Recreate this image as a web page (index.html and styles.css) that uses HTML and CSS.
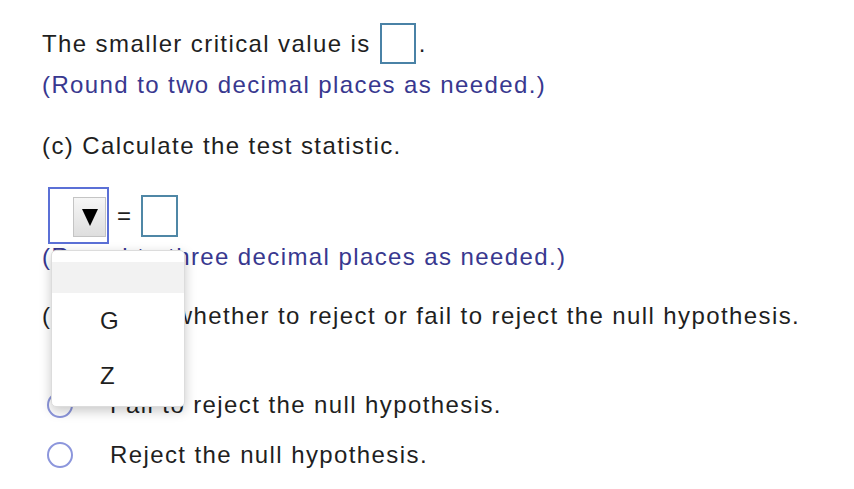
FILE: index.html
```html
<!DOCTYPE html>
<html lang="en">
<head>
    <meta charset="UTF-8">
    <meta name="viewport" content="width=device-width, initial-scale=1.0">
    <title>Hypothesis Test - Part (c)</title>
    <link rel="stylesheet" href="styles.css">
</head>
<body>
    <div class="question">
        <div class="answer-line">
            <span>The smaller critical value is</span>
            <span class="answer-box"></span>
            <span class="period">.</span>
        </div>
        <p class="hint hint-first">(Round to two decimal places as needed.)</p>

        <p class="prompt prompt-c">(c) Calculate the test statistic.</p>

        <div class="stat-row">
            <div class="select">
                <span class="select-btn"><span class="arrow"></span></span>
                <!-- open dropdown list -->
                <ul class="menu">
                    <li class="menu-item menu-blank"></li>
                    <li class="menu-item">G</li>
                    <li class="menu-item">Z</li>
                </ul>
            </div>
            <span class="equals">=</span>
            <span class="answer-box answer-box-small"></span>
        </div>
        <p class="hint hint-second">(Round to three decimal places as needed.)</p>

        <p class="prompt prompt-d">(d) Decide whether to reject or fail to reject the null hypothesis.</p>

        <label class="choice choice-first"><span class="radio"></span>Fail to reject the null hypothesis.</label>
        <label class="choice choice-second"><span class="radio"></span>Reject the null hypothesis.</label>
    </div>
</body>
</html>
```

FILE: styles.css
```css
body {
    margin: 0;
    background: #fff;
    font-family: "Liberation Sans", Arial, sans-serif;
    font-size: 24px;
    letter-spacing: 1.4px;
    color: #1f1f1f;
}
.question {
    padding: 23px 0 0 42px;
}
p {
    margin: 0;
    line-height: 28px;
}
.answer-line {
    display: flex;
    align-items: center;
    height: 41px;
    line-height: 28px;
}
.answer-box {
    display: inline-block;
    box-sizing: border-box;
    width: 36px;
    height: 41px;
    margin-left: 9px;
    border: 2px solid #4a82a6;
    background: #fff;
}
.period {
    margin-left: 3px;
}
.hint {
    color: #38388f;
}
.hint-first {
    margin-top: 7px;
}
.prompt-c {
    margin-top: 33px;
}
.stat-row {
    display: flex;
    align-items: center;
    margin-top: 27px;
    padding-left: 6px;
    line-height: 28px;
}
.select {
    position: relative;
    box-sizing: border-box;
    width: 61px;
    height: 57px;
    border: 2px solid #5b70d6;
    display: flex;
    justify-content: flex-end;
    align-items: flex-start;
    padding: 8px 1px 0 0;
}
.select-btn {
    box-sizing: border-box;
    width: 33px;
    height: 40px;
    border: 1px solid #c4c4c4;
    background: linear-gradient(#f6f6f6, #dedede);
    display: flex;
    justify-content: center;
    align-items: center;
}
.arrow {
    width: 0;
    height: 0;
    border-left: 8px solid transparent;
    border-right: 8px solid transparent;
    border-top: 17px solid #000;
}
.menu {
    position: absolute;
    left: 1px;
    top: 61px;
    z-index: 10;
    box-sizing: border-box;
    width: 134px;
    margin: 0;
    padding: 11px 0 3px;
    list-style: none;
    background: #fff;
    border: 1px solid #dcdcdc;
    border-radius: 5px;
    box-shadow: 0 4px 12px rgba(0, 0, 0, 0.22);
}
.menu-item {
    height: 55px;
    line-height: 55px;
    padding-left: 48px;
    color: #1f1f1f;
}
.menu-blank {
    height: 31px;
    background: #f2f2f2;
}
.equals {
    margin: 0 9px 0 8px;
}
.answer-box-small {
    width: 37px;
    height: 42px;
    margin-left: 0;
    border-color: #4f87a6;
}
.hint-second {
    margin-top: -1px;
}
.prompt-d {
    margin-top: 31px;
}
.choice {
    display: flex;
    align-items: center;
    height: 28px;
    line-height: 28px;
}
.choice-first {
    margin-top: 61px;
}
.choice-second {
    margin-top: 22px;
}
.radio {
    box-sizing: border-box;
    width: 26px;
    height: 26px;
    margin: 0 37px 0 5px;
    border: 2px solid #8c96dc;
    border-radius: 50%;
}
```
